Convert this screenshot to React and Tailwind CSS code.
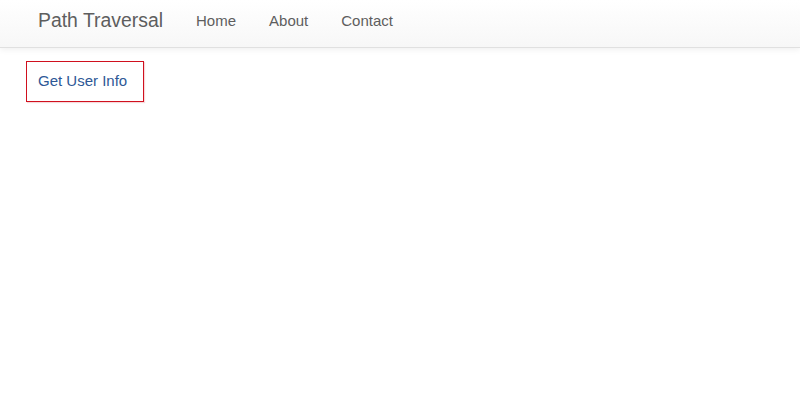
export default function App() {
  return (
    <div className="min-h-[403px] bg-white" style={{ fontFamily: '"Liberation Sans", Arial, sans-serif' }}>
      <nav className="h-[48px] border-b border-[#e0e0e0] bg-gradient-to-b from-white to-[#f7f7f7] shadow-[0_2px_6px_rgba(0,0,0,0.06)]">
        <div className="flex h-[47px] items-center gap-[33px] pb-[6px] pl-[38px]">
          <a className="text-[19.4px] leading-none text-[#5e5e5e]">Path Traversal</a>
          <a className="text-[15px] leading-none text-[#5e5e5e]">Home</a>
          <a className="text-[15px] leading-none text-[#5e5e5e]">About</a>
          <a className="text-[15px] leading-none text-[#5e5e5e]">Contact</a>
        </div>
      </nav>
      <div className="pl-[26px] pt-[13px]">
        <button
          type="button"
          className="flex h-[41px] w-[118px] items-center border border-[#d0101e] pl-[11px] text-[15px] text-[#2d5896] shadow-[1px_1px_1px_rgba(200,0,20,0.15)]"
        >
          Get User Info
        </button>
      </div>
    </div>
  );
}
